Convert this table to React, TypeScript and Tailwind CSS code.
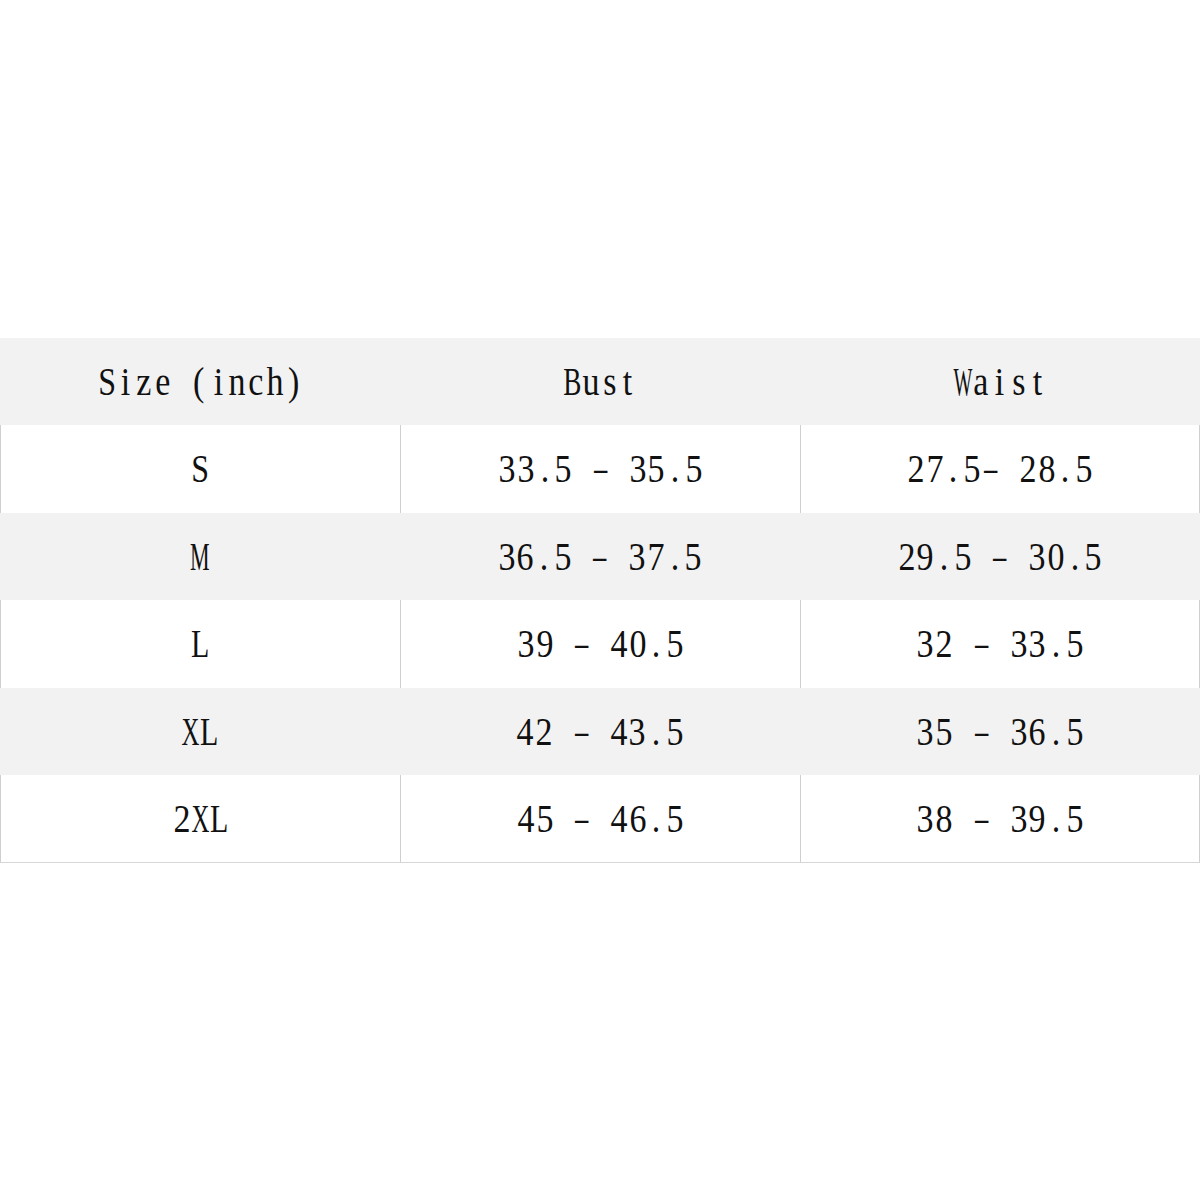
import React from "react";

const rows: string[][] = [
  ["S", "33.5 - 35.5", "27.5- 28.5"],
  ["M", "36.5 - 37.5", "29.5 - 30.5"],
  ["L", "39 - 40.5", "32 - 33.5"],
  ["XL", "42 - 43.5", "35 - 36.5"],
  ["2XL", "45 - 46.5", "38 - 39.5"],
];

const scaleMap: Record<string, string> = {
  W: "scale-x-[0.5]",
  M: "scale-x-[0.55]",
  B: "scale-x-[0.68]",
  X: "scale-x-[0.62]",
  L: "scale-x-[0.75]",
  S: "scale-x-[0.8]",
  "-": "scale-x-[1.3] scale-y-[0.8]",
};

function Mono({ text }: { text: string }) {
  return (
    <span className="inline-flex items-center">
      {Array.from(text).map((c, i) =>
        c === "（" ? (
          <span key={i} className="inline-flex w-[37.33px] justify-end pr-[4px]">
            <span className="inline-block scale-x-[0.85]">(</span>
          </span>
        ) : (
          <span key={i} className="inline-flex w-[18.67px] justify-center overflow-visible">
            <span className={`inline-block ${scaleMap[c] ?? "scale-x-[0.85]"}`}>
              {c === " " ? "\u00a0" : c}
            </span>
          </span>
        )
      )}
    </span>
  );
}

export default function App() {
  const heights = ["h-[88px]", "h-[87px]", "h-[88px]", "h-[87px]", "h-[88px]"];
  return (
    <div className="w-[1200px] h-[1200px] bg-white" style={{ fontFamily: '"Liberation Serif", serif' }}>
      <div className="pt-[338px]">
        <div className="grid grid-cols-3 h-[87px] bg-[#f2f2f2] text-[40px] leading-none text-[#111]">
          <div className="flex items-center justify-center"><Mono text="Size（inch)" /></div>
          <div className="flex items-center justify-center"><Mono text="Bust" /></div>
          <div className="flex items-center justify-center"><Mono text="Waist" /></div>
        </div>
        {rows.map((r, idx) => {
          const gray = idx % 2 === 1;
          const last = idx === rows.length - 1;
          return (
            <div
              key={idx}
              className={`grid grid-cols-3 ${heights[idx]} text-[40px] leading-none text-[#111] ${gray ? "bg-[#f2f2f2]" : "bg-white"} ${last ? "border-b border-[#d6d6d6]" : ""}`}
            >
              {r.map((c, j) => (
                <div
                  key={j}
                  className={`flex items-center justify-center ${gray ? "" : "border-l border-[#cfcfcf]"} ${!gray && j === 2 ? "border-r" : ""}`}
                >
                  <Mono text={c} />
                </div>
              ))}
            </div>
          );
        })}
      </div>
    </div>
  );
}
